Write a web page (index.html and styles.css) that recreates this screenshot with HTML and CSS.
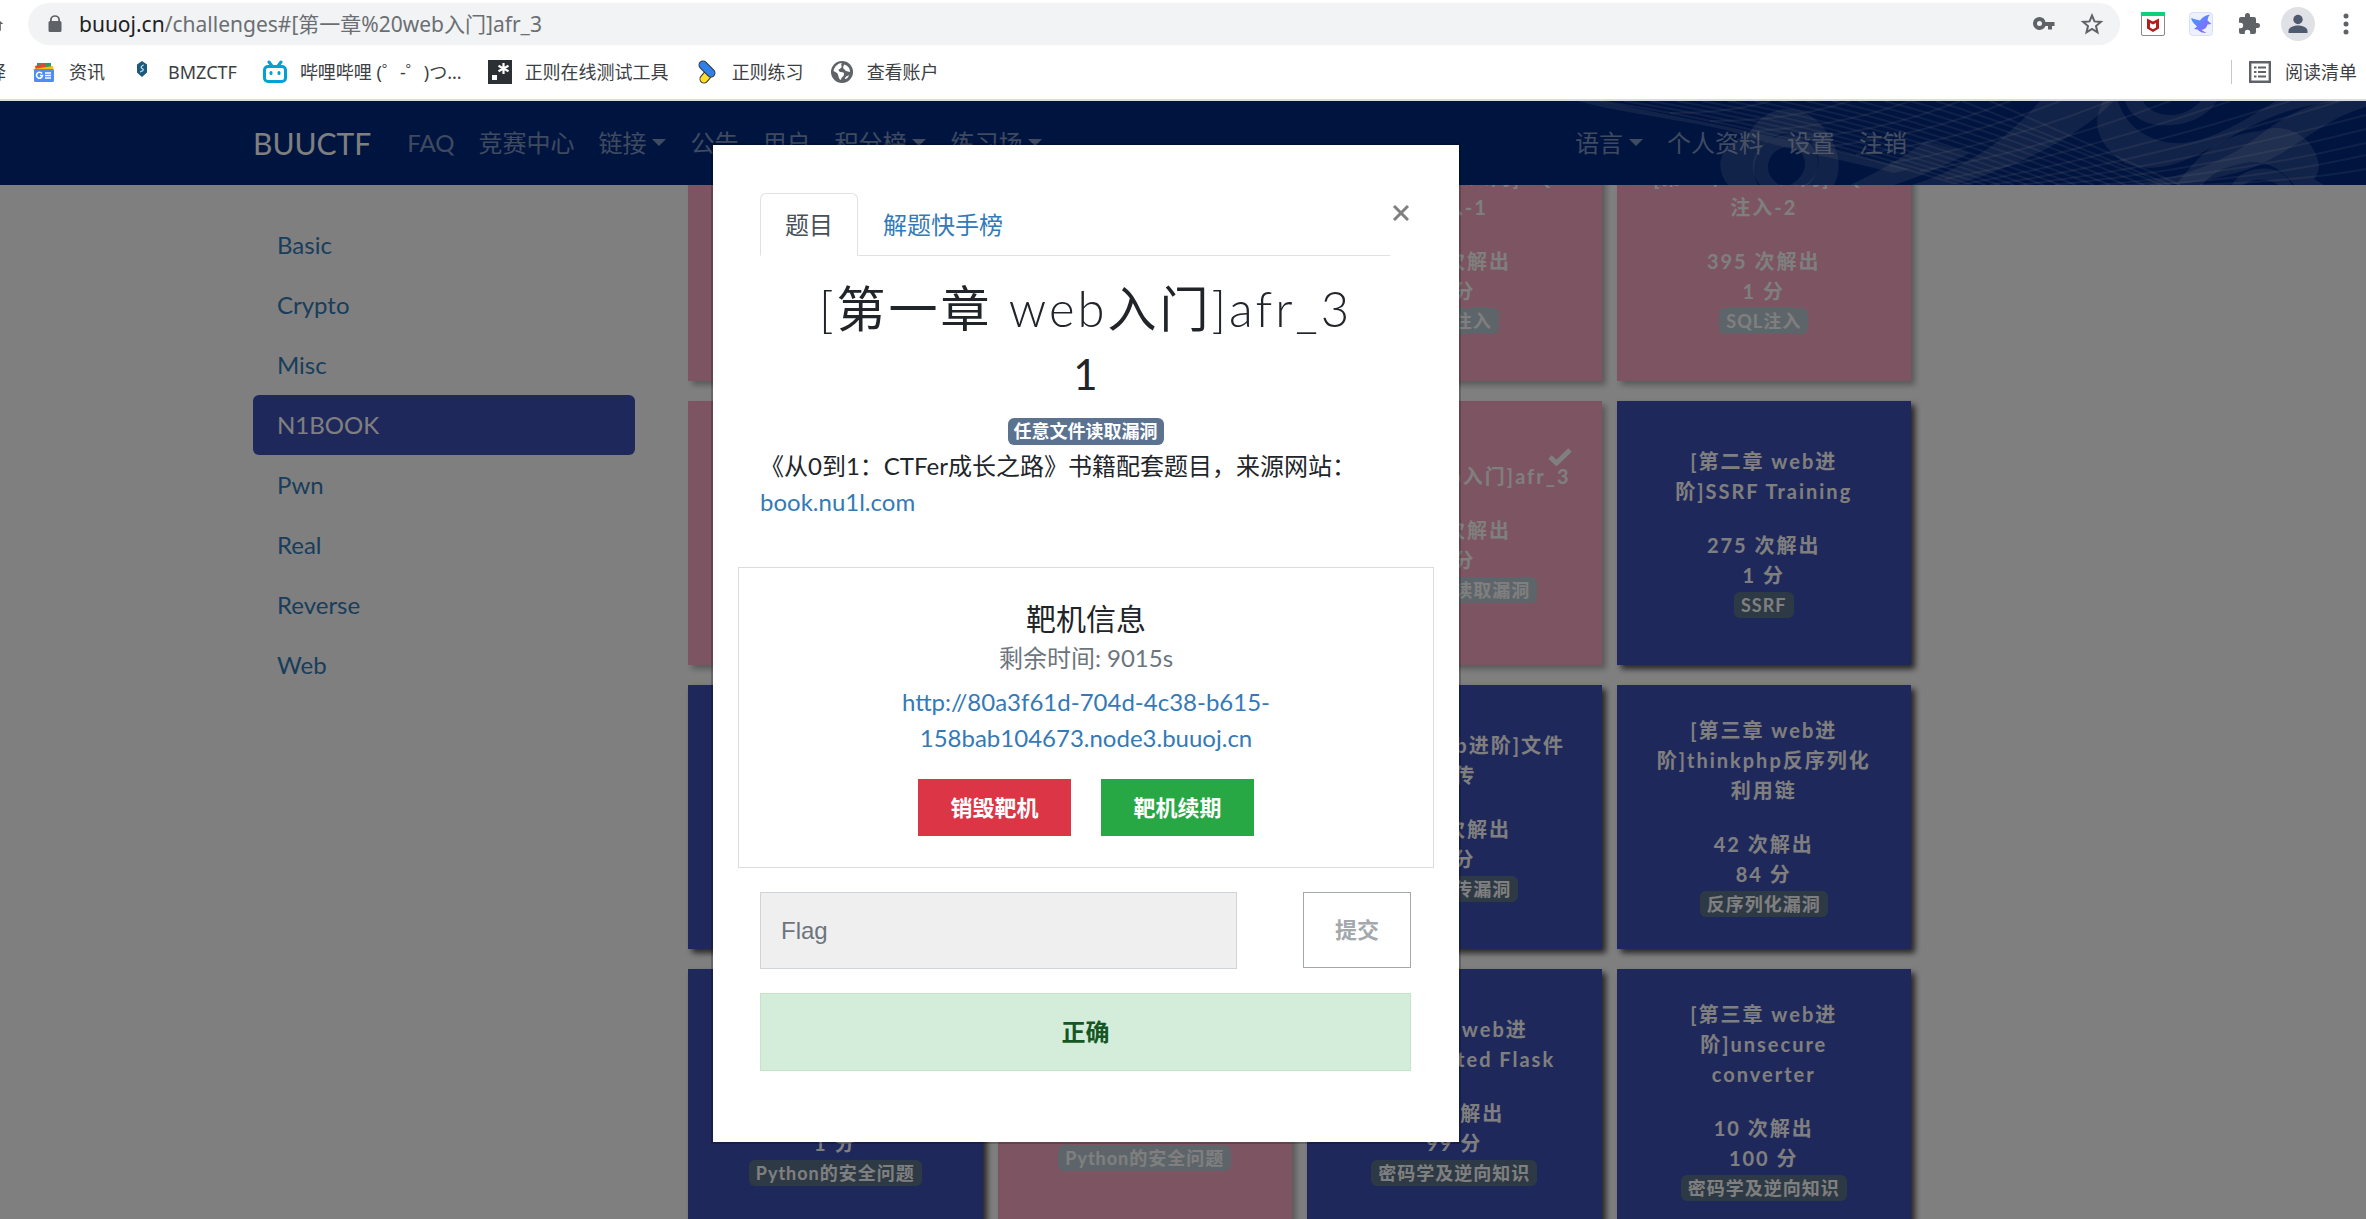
FILE: index.html
```html
<!DOCTYPE html>
<html lang="zh-CN">
<head>
<meta charset="utf-8">
<title>BUUCTF</title>
<link rel="stylesheet" href="styles.css">
</head>
<body>
<header class="browser">
  <div class="toolbar">
    <svg class="home" width="20" height="24" viewBox="0 0 24 24"><path fill="#5f6368" d="M10 20v-6h4v6h5v-8h3L12 3 2 12h3v8z"/></svg>
    <div class="omnibox">
      <svg width="14" height="18" viewBox="0 0 14 18"><path fill="#5f6368" d="M2 6V5a5 4.800 0 0 1 10 0v1a1.500 1.500 0 0 1 1.500 1.500v8A1.500 1.500 0 0 1 12 17H2a1.500 1.500 0 0 1-1.500-1.500v-8A1.500 1.500 0 0 1 2 6zm1.800 0h6.400V5a3.200 3.200 0 0 0-6.400 0z"/></svg>
      <span class="url"><b>buuoj.cn</b>/challenges#[第一章%20web入门]afr_3</span>
      <svg class="key" width="22" height="14" viewBox="0 0 22 14"><path fill="#5f6368" fill-rule="evenodd" d="M6.500 0a6.500 6.500 0 1 0 6 9H15v3.500h4V9h2.500V5h-9a6.500 6.500 0 0 0-6-5zm0 4a2.500 2.500 0 1 1 0 5 2.500 2.500 0 0 1 0-5z"/></svg>
      <svg class="star" width="24" height="24" viewBox="0 0 24 24"><path fill="none" stroke="#5f6368" stroke-width="2" d="M12 3.500l2.500 5.900 6.400.5-4.900 4.200 1.500 6.300-5.500-3.400-5.500 3.400L8 14.100 3.100 9.900l6.400-.5z"/></svg>
    </div>
    <svg width="24" height="24" viewBox="0 0 24 24"><rect x=".5" y=".5" width="23" height="23" rx="1.500" fill="#fff" stroke="#8a8a8a"/><path fill="#0fd07a" d="M0 0h24v4H0z"/><path fill="#b71c1c" d="M6 6.500l6 3 6-3v10L12 20l-6-3.500zm3 4.500v4.500l3 1.700 3-1.700V11l-3 1.500z"/></svg>
    <svg width="24" height="24" viewBox="0 0 24 24"><defs><linearGradient id="bird" x1="0" x2="1" y1="0" y2="1"><stop offset="0" stop-color="#3aa0ff"/><stop offset="1" stop-color="#9a5cff"/></linearGradient></defs><rect x=".5" y=".5" width="23" height="23" rx="3" fill="#edf0fd" stroke="#d9def5"/><path fill="url(#bird)" d="M2 6l5 1.500 4 1C13 5 17 3 21 2.500c-2 2-2 4-2.500 6l4 3.500-4 .5c-.5 3-3 5-6 5.500l5 3c-4 0-7-1-9-3.500L5 17l3-2.500C5 12 3 9.500 2 6z"/></svg>
    <svg width="24" height="24" viewBox="0 0 24 24"><path fill="#5f6368" d="M20.500 11H19V7a2 2 0 0 0-2-2h-4V3.500a2.500 2.500 0 0 0-5 0V5H4a2 2 0 0 0-2 2v3.800h1.500a2.700 2.700 0 0 1 0 5.400H2V20a2 2 0 0 0 2 2h3.800v-1.500a2.700 2.700 0 0 1 5.400 0V22H17a2 2 0 0 0 2-2v-4h1.500a2.500 2.500 0 0 0 0-5z"/></svg>
    <svg class="avatar" width="34" height="34" viewBox="0 0 34 34"><circle cx="17" cy="17" r="17" fill="#dfe1e6"/><circle cx="17" cy="12.500" r="4.700" fill="#505a6e"/><path fill="#505a6e" d="M7.500 26v-2c0-4 6-5.500 9.500-5.500s9.500 1.500 9.500 5.500v2z"/></svg>
    <svg class="dots" width="6" height="24" viewBox="0 0 6 24"><g fill="#5f6368"><circle cx="3" cy="4" r="2.500"/><circle cx="3" cy="12" r="2.500"/><circle cx="3" cy="20" r="2.500"/></g></svg>
  </div>
  <nav class="bookmarks">
    <a href="#">译</a>
    <a href="#"><svg width="24" height="24" viewBox="0 0 24 24"><path fill="#1ea362" d="M5 3h14v8H5z"/><path fill="#ea4335" d="M3 6l10-3 2 8H4z"/><path fill="#fbbc04" d="M1 9l20-3 1 6H3z"/><rect x="2" y="9" width="20" height="13" rx="1.500" fill="#4f8df5"/><path fill="none" stroke="#fff" stroke-width="1.600" d="M10 13.500a3 3 0 1 0 .5 2H8M13 13h6M13 15.500h6M13 18h6"/></svg>资讯</a>
    <a href="#"><svg width="24" height="24" viewBox="0 0 24 24"><path fill="#1c5a7d" d="M11 1l5 3.500v8L11 17l-5-4.500v-8z"/><path fill="none" stroke="#bfe0ee" stroke-width="1.200" d="M9 12c4-1 4-3 2-3.500S11 5 13 5"/></svg>BMZCTF</a>
    <a href="#"><svg width="24" height="24" viewBox="0 0 24 24"><path fill="none" stroke="#00a1d6" stroke-width="3" stroke-linecap="round" d="M6 2l3 4M18 2l-3 4M5 6.500h14a3.500 3.500 0 0 1 3.500 3.500v8a3.500 3.500 0 0 1-3.500 3.500H5A3.500 3.500 0 0 1 1.500 18v-8A3.500 3.500 0 0 1 5 6.500zM8 12.500v1M16 12.500v1"/></svg>哔哩哔哩 (゜-゜)つ...</a>
    <a href="#"><svg width="24" height="24" viewBox="0 0 24 24"><path fill="#2b3034" d="M0 0h24v24H0z"/><path fill="#fff" d="M4 15h5v5H4z"/><path stroke="#fff" stroke-width="2.200" d="M15.500 3v11M10.500 5.800l10 5.400M20.500 5.800l-10 5.400"/></svg>正则在线测试工具</a>
    <a href="#"><svg width="24" height="24" viewBox="0 0 24 24"><g fill="none" stroke-linecap="round"><path stroke="#31343a" stroke-width="9" d="M9 19l5-6"/><path stroke="#ffdf2b" stroke-width="7" d="M9 19l5-6"/><path stroke="#31343a" stroke-width="9" d="M8 5l8 8"/><path stroke="#2f80e8" stroke-width="7" d="M8 5l8 8"/></g></svg>正则练习</a>
    <a href="#"><svg width="24" height="24" viewBox="0 0 24 24"><circle cx="12" cy="12" r="11" fill="#5f6368"/><path fill="#fff" d="M3.500 11c1-5 5-8 8.500-8-2 2 1 3-1 5s-3 1-2 3 5 0 5 3-3 3-3 6c-3-1-2-5-4-7zM14 4.500c4 1 6 4 6 7.500l-4-1-3-3zM15 19c0-3 3-3 4-4-.5 2-2 4-4 4z"/></svg>查看账户</a>
    <a class="reading" href="#"><svg width="22" height="22" viewBox="0 0 22 22"><path fill="none" stroke="#5f6368" stroke-width="2.400" d="M1.200 1.200h19.600v19.600H1.200z"/><path stroke="#5f6368" stroke-width="2" d="M5 6.500h2.500M9 6.500h8M5 11h2.500M9 11h8M5 15.500h2.500M9 15.500h8"/></svg>阅读清单</a>
  </nav>
</header>

<div class="page">
  <nav class="navbar">
    <svg class="nav-art" viewBox="0 0 806 84" preserveAspectRatio="xMaxYMid slice">
      <g fill="#fff" fill-opacity=".14">
        <path d="M190 32c6-14 22-24 38-24 24 0 44 22 50 48 2 10 0 20-4 28h-30c12-6 16-18 14-28-2-16-14-24-28-24-20 0-36 18-36 38 0 6 2 10 4 14h-30c-14-18-10-40 22-52z"/>
        <path fill-rule="evenodd" d="M228 34c17 0 30 12 30 28 0 9-4 17-10 22h-48c-4-5-7-10-7-18 0-18 16-32 35-32zm0 12c-12 0-20 10-20 20 0 8 5 14 12 18h10c8-4 15-12 15-21 0-10-7-17-17-17z"/>
        <path d="M18 0h22c70 14 140 28 220 46l90 22-16 4C290 60 220 48 170 30 120 18 60 12 18 0z"/>
        <path d="M290 84c30-14 50-26 76-44l44 12c-24 12-50 24-76 32zM352 84c50-16 90-40 128-84h74c-40 40-100 66-160 84z"/>
        <path fill-rule="evenodd" d="M543 0c-12 22-6 44 22 62 40 16 80-12 120-34 40-20 70-28 121-28h-90c-30 18-60 38-92 42-30 2-58-14-66-42z"/>
        <path d="M565 0c6 18 24 26 48 24 22-2 36-12 44-24h-16c-8 8-18 14-30 14-14 0-24-6-28-14z"/>
        <path d="M546 84c50 0 100-14 140-40 26-18 44-36 84-44h36v6c-50 14-74 50-130 66-30 8-56 12-80 12z"/>
        <path d="M700 30c26-10 50 6 56 24 4 10 4 16-2 24l10 6h-30c-12-16-30-26-50-22-22 4-34 12-42 22h-26c20-26 40-50 84-54z"/>
        <path d="M672 84c6-12 22-18 38-16 10 1 18 8 22 16h-14c-6-6-26-8-34 0z"/>
      </g>
      <g fill="none" stroke="#fff" stroke-opacity=".13" stroke-width="2">
        <path d="M40 0Q200 24 400 84M64 0Q220 24 412 84M90 0Q240 24 426 84M116 0Q260 24 440 84M142 0Q280 24 454 84M168 0Q300 24 468 84M194 0Q320 24 484 84M220 0Q340 24 500 84M246 0Q360 24 516 84M272 0Q380 24 534 84M298 0Q400 24 550 84M324 0Q420 24 566 84M350 0Q440 24 584 84M376 0Q460 26 602 84M402 0Q480 30 610 84M430 0Q500 30 620 84"/>
        <path d="M110 12Q170 12 210 0M150 20Q230 20 290 0M190 30Q280 26 350 0M230 38Q320 32 400 0M262 46Q360 36 450 0M296 54Q400 40 500 0M330 62Q440 44 550 0M360 70Q480 50 610 0M385 78Q520 52 670 0M400 84Q560 54 730 0M430 84Q590 60 780 0M460 84Q620 64 806 14M495 84Q650 68 806 28M540 84Q680 72 806 42M590 84Q710 76 806 54M640 84Q740 80 806 68"/>
      </g>
    </svg>
    <div class="container nav-row">
      <a class="brand" href="#">BUUCTF</a>
      <a href="#">FAQ</a>
      <a href="#">竞赛中心</a>
      <a class="caret" href="#">链接</a>
      <a href="#">公告</a>
      <a href="#">用户</a>
      <a class="caret" href="#">积分榜</a>
      <a class="caret" href="#">练习场</a>
      <a class="caret push" href="#">语言</a>
      <a href="#">个人资料</a>
      <a href="#">设置</a>
      <a href="#">注销</a>
    </div>
  </nav>

  <main class="container board">
    <nav class="categories">
      <a href="#">Basic</a>
      <a href="#">Crypto</a>
      <a href="#">Misc</a>
      <a class="active" href="#">N1BOOK</a>
      <a href="#">Pwn</a>
      <a href="#">Real</a>
      <a href="#">Reverse</a>
      <a href="#">Web</a>
    </nav>
    <section class="cards">
      <button class="card solved"><span class="name">[第一章 web入门]<br>常见的搜集</span><span>697 次解出</span><span>1 分</span><span class="tag">信息搜集</span></button>
      <button class="card solved"><span class="name">[第一章 web入门]<br>粗心的小李</span><span>611 次解出</span><span>1 分</span><span class="tag">信息搜集</span></button>
      <button class="card solved"><span class="name">[第一章 web入门]SQL<br>注入-1</span><span>464 次解出</span><span>1 分</span><span class="tag">SQL注入</span></button>
      <button class="card solved"><span class="name">[第一章 web入门]SQL<br>注入-2</span><span>395 次解出</span><span>1 分</span><span class="tag">SQL注入</span></button>

      <button class="card solved"><span class="name">[第一章 web入门]afr_1</span><span>500 次解出</span><span>1 分</span><span class="tag">任意文件读取漏洞</span></button>
      <button class="card solved"><span class="name">[第一章 web入门]afr_2</span><span>488 次解出</span><span>1 分</span><span class="tag">任意文件读取漏洞</span></button>
      <button class="card solved"><svg class="check" width="24" height="18" viewBox="0 0 24 18"><path fill="none" stroke="#fff" stroke-width="5" d="M2 9l6.500 6L22 2"/></svg><span class="name">[第一章 web入门]afr_3</span><span>316 次解出</span><span>1 分</span><span class="tag">任意文件读取漏洞</span></button>
      <button class="card"><span class="name">[第二章 web进<br>阶]SSRF Training</span><span>275 次解出</span><span>1 分</span><span class="tag">SSRF</span></button>

      <button class="card"><span class="name">[第二章 web进阶]死亡<br>ping命令</span><span>142 次解出</span><span>1 分</span><span class="tag">命令执行漏洞</span></button>
      <button class="card"><span class="name">[第二章 web进阶]XSS<br>的魔力</span><span>168 次解出</span><span>1 分</span><span class="tag">XSS</span></button>
      <button class="card"><span class="name">[第二章 web进阶]文件<br>上传</span><span>164 次解出</span><span>1 分</span><span class="tag">文件上传漏洞</span></button>
      <button class="card"><span class="name">[第三章 web进<br>阶]thinkphp反序列化<br>利用链</span><span>42 次解出</span><span>84 分</span><span class="tag">反序列化漏洞</span></button>

      <button class="card"><span class="name">[第三章 web进<br>阶]Python里的SSRF</span><span>145 次解出</span><span>1 分</span><span class="tag">Python的安全问题</span></button>
      <button class="card solved"><span class="name">[第三章 web进阶]SSTI</span><span>198 次解出</span><span>1 分</span><span class="tag">Python的安全问题</span></button>
      <button class="card"><span class="name">[第三章 web进<br>阶]Encrypted Flask</span><span>13 次解出</span><span>99 分</span><span class="tag">密码学及逆向知识</span></button>
      <button class="card"><span class="name">[第三章 web进<br>阶]unsecure<br>converter</span><span>10 次解出</span><span>100 分</span><span class="tag">密码学及逆向知识</span></button>
    </section>
  </main>

  <div class="backdrop">
    <div class="modal" role="dialog" aria-labelledby="challenge-name">
      <div class="modal-top">
        <div class="tabs">
          <a class="active" href="#">题目</a>
          <a href="#">解题快手榜</a>
        </div>
        <button class="close" aria-label="关闭"><svg width="16" height="16" viewBox="0 0 16 16"><path stroke="#7f7f7f" stroke-width="3" d="M1 1l14 14M15 1L1 15"/></svg></button>
      </div>
      <h2 id="challenge-name"><span>[</span>第一章<span> web</span>入门<span>]afr_3</span></h2>
      <h3>1</h3>
      <span class="badge">任意文件读取漏洞</span>
      <p class="desc">《从0到1：CTFer成长之路》书籍配套题目，来源网站：<br><a href="#">book.nu1l.com</a></p>
      <section class="target">
        <h5>靶机信息</h5>
        <p class="left">剩余时间: 9015s</p>
        <a href="#">http://80a3f61d-704d-4c38-b615-158bab104673.node3.buuoj.cn</a>
        <div class="actions">
          <button class="danger">销毁靶机</button>
          <button class="success">靶机续期</button>
        </div>
      </section>
      <form class="answer">
        <input type="text" placeholder="Flag" aria-label="Flag">
        <button type="button">提交</button>
      </form>
      <div class="alert" role="alert">正确</div>
    </div>
  </div>
</div>
</body>
</html>
```
FILE: styles.css
```css
* { box-sizing: border-box; }

body {
  margin: 0;
  height: 100vh;
  display: flex;
  flex-direction: column;
  overflow: hidden;
  font: 24px/36px Lato, "Noto Sans CJK SC", sans-serif;
  color: #212529;
  background: #fff;
}
a { color: #337ab7; text-decoration: none; }
button { font: inherit; border: 0; cursor: pointer; }
h2, h3, h5, p { margin: 0; font-weight: 400; }
svg { flex: none; }

/* Browser chrome */
.browser {
  height: 101px;
  flex: none;
  border-bottom: 2px solid #dadce0;
  font-family: "Noto Sans", "Noto Sans CJK SC", sans-serif;
}
.toolbar {
  display: flex;
  align-items: center;
  gap: 24px;
  height: 42px;
  margin: 3px 17px 0 -15px;
}
.home { margin-right: -1px; }
.omnibox {
  flex: 1;
  display: flex;
  align-items: center;
  gap: 17px;
  height: 42px;
  padding: 0 16px 0 20px;
  margin: 0 -3px 0 0;
  border-radius: 21px;
  background: #f1f3f4;
}
.url { flex: 1; font-size: 21px; line-height: 30px; color: #6b6f73; white-space: nowrap; }
.url b { font-weight: 400; color: #202124; }
.key { margin-right: 8px; }
.avatar { margin: 0 0 0 -4px; }
.dots { margin-left: 4px; }
.bookmarks {
  display: flex;
  align-items: center;
  gap: 26px;
  height: 54px;
  margin: 0 9px 0 -12px;
  font-size: 18px;
  line-height: 24px;
}
.bookmarks a {
  display: flex;
  align-items: center;
  gap: 13px;
  color: #3c4043;
  white-space: nowrap;
}
.bookmarks .reading {
  margin-left: auto;
  padding-left: 17px;
  gap: 14px;
  border-left: 1px solid #c4c7cb;
}

/* Site */
.page {
  position: relative;
  flex: 1;
  min-height: 0;
  margin-left: -194px;
  display: flex;
  flex-direction: column;
}
.container {
  width: 100%;
  max-width: 1710px;
  margin: 0 auto;
  padding: 0 22px;
}
.navbar {
  position: relative;
  flex: none;
  height: 84px;
  background: #002880;
}
.nav-art {
  position: absolute;
  right: 0;
  top: 0;
  width: 806px;
  height: 84px;
}
.nav-row {
  position: relative;
  display: flex;
  align-items: center;
  height: 84px;
}
.nav-row a { padding: 0 12px; color: rgba(255, 255, 255, .5); white-space: nowrap; }
.nav-row .brand { padding: 0; margin-right: 24px; font-size: 30px; color: #fff; }
.nav-row .push { margin-left: auto; }
.caret::after {
  content: "";
  display: inline-block;
  margin-left: 6px;
  vertical-align: 6px;
  border: 7px solid transparent;
  border-top-color: currentColor;
  border-bottom: 0;
}

.board {
  flex: 1;
  min-height: 0;
  display: grid;
  grid-template-columns: 382px 1fr;
  gap: 53px;
  padding-right: 30px;
  overflow: hidden;
}
.categories { padding-top: 30px; }
.categories a { display: block; padding: 12px 24px; border-radius: 6px; }
.categories .active { background: #3f51b5; color: #fff; }

.cards {
  display: grid;
  grid-template-columns: repeat(4, 1fr);
  grid-auto-rows: 264px;
  gap: 20px 15px;
  margin-top: -68px;
}
.card {
  position: relative;
  display: flex;
  flex-direction: column;
  align-items: center;
  justify-content: center;
  padding: 0;
  font-size: 20px;
  line-height: 30px;
  font-weight: 700;
  letter-spacing: 2px;
  white-space: nowrap;
  color: #fff;
  background: #3f51b5;
  box-shadow: 4px 4px 6px rgba(0, 0, 0, .7);
}
.card.solved { background: #faa8c2; box-shadow: 4px 4px 6px rgba(0, 0, 0, .3); }
.name { margin-bottom: 24px; }
.tag {
  margin: 2px 0;
  padding: 0 7px;
  border-radius: 6px;
  font-size: 18px;
  line-height: 26px;
  letter-spacing: 1px;
  background: #5b728a;
}
.solved .tag { background: #bccbd4; }
.check { position: absolute; top: 47px; right: 30px; }

/* Challenge dialog */
.backdrop {
  position: absolute;
  inset: 0;
  padding-top: 42px;
  background: rgba(0, 0, 0, .5);
}
.modal {
  width: 750px;
  margin: 0 auto;
  padding: 48px 48px 71px 47px;
  border: 2px solid rgba(0, 0, 0, .2);
  background: #fff;
  background-clip: padding-box;
  text-align: center;
}
.modal-top { display: flex; align-items: flex-start; }
.tabs { flex: 1; display: flex; border-bottom: 1px solid #dee2e6; }
.tabs a {
  padding: 13px 24px 12px;
  margin-bottom: -1px;
  border: 1px solid transparent;
  border-radius: 6px 6px 0 0;
}
.tabs .active { color: #495057; border-color: #dee2e6 #dee2e6 #fff; background: #fff; }
.close { width: 21px; height: 40px; padding: 0; background: none; }
.close svg { display: block; margin: 0 auto; }
.modal h2 { margin-top: 22px; font-size: 49px; line-height: 60px; letter-spacing: 3px; white-space: nowrap; }
.modal h2 span { font-weight: 300; }
.modal h3 { margin: 10px 0 18px; font-size: 42px; line-height: 52px; }
.badge {
  display: block;
  width: fit-content;
  margin: 0 auto 3px;
  padding: 0 6px;
  border-radius: 6px;
  font-size: 18px;
  line-height: 27px;
  font-weight: 700;
  color: #fff;
  background: #5b7290;
}
.desc { text-align: left; }
.target {
  margin: 47px -23px 24px -22px;
  padding: 32px 21px 31px;
  border: 1px solid #dcdcdc;
}
.target h5 { margin-bottom: 4px; font-size: 30px; line-height: 36px; }
.target .left { margin-bottom: 8px; color: #6c757d; }
.actions { display: flex; justify-content: center; gap: 30px; margin-top: 23px; }
.actions button {
  width: 153px;
  height: 57px;
  padding: 0;
  font-size: 22px;
  font-weight: 700;
  color: #fff;
}
.danger { background: #dc3545; }
.success { background: #28a745; }
.answer { display: flex; justify-content: space-between; margin-bottom: 24px; }
.answer input {
  width: 477px;
  height: 77px;
  padding: 0 20px;
  border: 1px solid #ced4da;
  border-radius: 0;
  font: 24px/36px "Liberation Sans", sans-serif;
  background: #efefef;
}
.answer input::placeholder { color: #6c757d; opacity: 1; }
.answer button {
  width: 108px;
  height: 76px;
  padding: 0;
  border: 1px solid #a3a8ad;
  font-size: 22px;
  font-weight: 700;
  color: #a3a8ad;
  background: #fff;
}
.alert {
  padding: 20px;
  border: 1px solid #c3e6cb;
  font-weight: 700;
  color: #155724;
  background: #d4edda;
}
```
